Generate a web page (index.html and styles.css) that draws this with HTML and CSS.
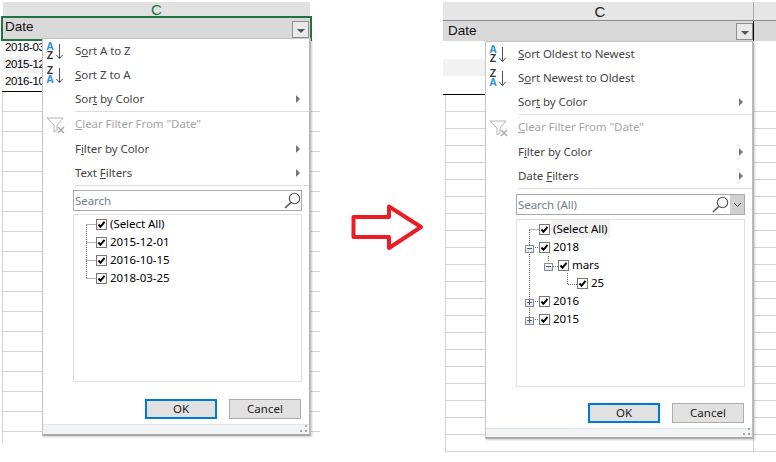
FILE: index.html
```html
<!DOCTYPE html>
<html lang="en">
<head>
<meta charset="utf-8">
<title>Excel date filter comparison</title>
<link rel="stylesheet" href="styles.css">
</head>
<body>
<svg class="defs" aria-hidden="true">
  <symbol id="arrow-down" viewBox="0 0 9 18"><path d="M4.500 1V16M1 12.500L4.500 16.500L8 12.500" fill="none" stroke="#444" stroke-width="1"/></symbol>
  <symbol id="funnel" viewBox="0 0 20 17"><path d="M1 1H17L11 8V13L8 15V8Z" fill="#fff" stroke="#b4b4b4"/><path d="M12 10L18 16M18 10L12 16" fill="none" stroke="#a6a6a6" stroke-width="1.400"/></symbol>
  <symbol id="glass" viewBox="0 0 17 17"><circle cx="10.500" cy="6.500" r="5.200" fill="none" stroke="#555" stroke-width="1.100"/><path d="M6.800 10.500L1 16" fill="none" stroke="#555" stroke-width="1.600"/></symbol>
  <symbol id="tick" viewBox="0 0 11 11"><rect x=".5" y=".5" width="10" height="10" fill="#fff" stroke="#777"/><path d="M2.500 5.500L4.500 7.800L8.500 2.800" fill="none" stroke="#000" stroke-width="2"/></symbol>
</svg>

<section class="panel panel-left">
  <div class="col-head col-head-active">C</div>
  <div class="date-cell date-active"><span>Date</span><span class="filter-btn"><i class="caret"></i></span></div>
  <div class="data-cell first-row"><span class="clip">2018-03-25</span></div>
  <div class="data-cell shaded"><span class="clip">2015-12-01</span></div>
  <div class="data-cell last-row"><span class="clip">2016-10-15</span></div>
  <div class="grid grid-wide"></div>
  <div class="menu">
    <div class="item"><span class="sort-icon"><span class="letters"><b class="blue">A</b><b>Z</b></span><svg class="down"><use href="#arrow-down"/></svg></span><span class="label">S<u>o</u>rt A to Z</span></div>
    <div class="item"><span class="sort-icon"><span class="letters"><b>Z</b><b class="blue">A</b></span><svg class="down"><use href="#arrow-down"/></svg></span><span class="label"><u>S</u>ort Z to A</span></div>
    <div class="item"><span class="label">Sor<u>t</u> by Color</span><i class="more"></i></div>
    <hr class="sep">
    <div class="item disabled"><span class="sort-icon"><svg class="funnel"><use href="#funnel"/></svg></span><span class="label"><u>C</u>lear Filter From "Date"</span></div>
    <div class="item"><span class="label">F<u>i</u>lter by Color</span><i class="more"></i></div>
    <div class="item"><span class="label">Text <u>F</u>ilters</span><i class="more"></i></div>
    <hr class="sep">
    <div class="search"><span class="search-text">Search</span><svg class="glass"><use href="#glass"/></svg></div>
    <div class="list">
      <svg class="dots" width="40" height="80"><path d="M12.500 10V64M12.500 9.500H22M12.500 27.500H22M12.500 45.500H22M12.500 63.500H22"/></svg>
      <div class="row"><svg class="check"><use href="#tick"/></svg><span>(Select All)</span></div>
      <div class="row"><svg class="check"><use href="#tick"/></svg><span>2015-12-01</span></div>
      <div class="row"><svg class="check"><use href="#tick"/></svg><span>2016-10-15</span></div>
      <div class="row"><svg class="check"><use href="#tick"/></svg><span>2018-03-25</span></div>
    </div>
    <div class="actions"><button class="btn btn-default">OK</button><button class="btn">Cancel</button></div>
    <div class="status"><i class="grip"></i></div>
  </div>
</section>

<svg class="big-arrow" width="80" height="56" viewBox="0 0 80 56"><path d="M2.500 14H38V3.500L70 24L38 45V34H2.500Z" fill="#fff" stroke="#ed1c24" stroke-width="4" stroke-linejoin="round"/></svg>

<section class="panel panel-right">
  <div class="col-head col-head-plain">C</div>
  <div class="date-cell date-plain"><span>Date</span><span class="filter-btn"><i class="caret"></i></span></div>
  <div class="blank-cell"></div>
  <div class="blank-cell shaded"></div>
  <div class="blank-cell last-row"></div>
  <div class="grid grid-narrow"></div>
  <div class="menu">
    <div class="item"><span class="sort-icon"><span class="letters"><b class="blue">A</b><b>Z</b></span><svg class="down"><use href="#arrow-down"/></svg></span><span class="label"><u>S</u>ort Oldest to Newest</span></div>
    <div class="item"><span class="sort-icon"><span class="letters"><b>Z</b><b class="blue">A</b></span><svg class="down"><use href="#arrow-down"/></svg></span><span class="label">S<u>o</u>rt Newest to Oldest</span></div>
    <div class="item"><span class="label">Sor<u>t</u> by Color</span><i class="more"></i></div>
    <hr class="sep">
    <div class="item disabled"><span class="sort-icon"><svg class="funnel"><use href="#funnel"/></svg></span><span class="label"><u>C</u>lear Filter From "Date"</span></div>
    <div class="item"><span class="label">F<u>i</u>lter by Color</span><i class="more"></i></div>
    <div class="item"><span class="label">Date <u>F</u>ilters</span><i class="more"></i></div>
    <hr class="sep">
    <div class="search"><span class="search-text">Search (All)</span><svg class="glass"><use href="#glass"/></svg><span class="search-drop"><svg width="9" height="6" viewBox="0 0 9 6"><path d="M1 1L4.500 4.500L8 1" fill="none" stroke="#444"/></svg></span></div>
    <div class="list">
      <svg class="dots" width="80" height="110"><path d="M12.500 10V100M12.500 9.500H22M18 27.500H22M18 81.500H22M18 99.500H22M31.500 36V41M36 46.500H41M50.500 53V64.500H60"/></svg>
      <div class="row"><svg class="check"><use href="#tick"/></svg><span class="hover">(Select All)</span></div>
      <div class="row"><i class="toggle minus"></i><svg class="check"><use href="#tick"/></svg><span>2018</span></div>
      <div class="row depth-1"><i class="toggle minus"></i><svg class="check"><use href="#tick"/></svg><span>mars</span></div>
      <div class="row depth-2"><svg class="check"><use href="#tick"/></svg><span>25</span></div>
      <div class="row"><i class="toggle plus"></i><svg class="check"><use href="#tick"/></svg><span>2016</span></div>
      <div class="row"><i class="toggle plus"></i><svg class="check"><use href="#tick"/></svg><span>2015</span></div>
    </div>
    <div class="actions"><button class="btn btn-default">OK</button><button class="btn">Cancel</button></div>
    <div class="status"><i class="grip"></i></div>
  </div>
</section>
</body>
</html>
```

FILE: styles.css
```css
* { box-sizing: border-box; }
html, body { margin: 0; padding: 0; }
body { width: 776px; height: 462px; position: relative; overflow: hidden; background: #fff; font-family: "Noto Sans", sans-serif; }
.defs { position: absolute; width: 0; height: 0; }

.panel { position: absolute; top: 2px; display: flex; flex-direction: column; }
.panel-left { left: 0; width: 320px; height: 441px; }
.panel-right { left: 443px; top: 2px; width: 333px; height: 451px; }

.col-head { display: flex; align-items: center; justify-content: center; font: 15px "Liberation Sans", sans-serif; background: #e6e6e6; }
.col-head-active { width: 307px; height: 14px; margin-left: 3px; color: #217346; background: #e1e1e1; }
.col-head-plain { height: 19px; padding-right: 19px; color: #222; border-bottom: 1px solid #8a8a8a; background: linear-gradient(90deg, #e6e6e6 310px, #a8a8a8 310px, #a8a8a8 311px, #e6e6e6 311px); }

.date-cell { display: flex; justify-content: space-between; font: 13.500px "Liberation Sans", sans-serif; color: #111; background: #d9d9d9; }
.date-active { width: 311px; height: 25px; margin-left: 1px; padding: 1px 1px 0 2px; border: 2px solid #217346; background: #d9d9d9; line-height: 16px; }
.date-plain { height: 20px; padding: 0 23px 0 5px; line-height: 19px; background: linear-gradient(90deg, #d9d9d9 310px, #000 310px, #000 311px, #d9d9d9 311px); }
.filter-btn { width: 17px; height: 17px; margin-top: 2px; display: flex; align-items: center; justify-content: center; background: #e8e8e8; border: 1px solid #8f8f8f; }
.caret { width: 0; height: 0; margin-top: 2px; border: 4px solid transparent; border-top: 4px solid #555; border-bottom: 0; }

.data-cell { width: 309px; margin-left: 2px; padding-left: 3px; font: 11.500px/13px "Liberation Sans", sans-serif; letter-spacing: -.4px; color: #000; height: 16px; border-right: 1px solid #000; }
.clip { display: block; width: 38px; overflow: hidden; white-space: nowrap; }
.shaded { background: #f2f2f2; }
.data-cell.shaded { padding-top: 1px; }
.data-cell.last-row { height: 19px; padding-top: 2px; border-bottom: 1px solid #000; }
.blank-cell { height: 18px; margin-right: 22px; border-right: 1px solid #000; }
.panel-right .blank-cell.shaded { height: 17px; }
.blank-cell.last-row { height: 19px; border-bottom: 1px solid #000; }

.grid { flex: 1; }
.grid-wide { margin-left: 2px; background:
  linear-gradient(90deg, #d4d4d4 1px, transparent 1px) 0 0 / 100% 100% no-repeat,
  repeating-linear-gradient(180deg, transparent 0, transparent 19px, #d4d4d4 19px, #d4d4d4 20px); }
.grid-narrow { margin-left: 2px; background:
  linear-gradient(90deg, #d4d4d4 1px, transparent 1px) 0 0 / 100% 100% no-repeat,
  linear-gradient(90deg, transparent 308px, #d4d4d4 308px, #d4d4d4 309px, transparent 309px) 0 0 / 100% 100% no-repeat,
  repeating-linear-gradient(180deg, transparent 0, transparent 16px, #d4d4d4 16px, #d4d4d4 17px); }

.menu { position: absolute; left: 42px; width: 269px; height: 398px; display: flex; flex-direction: column; background: #fff; border: 1px solid #c6c6c6; border-right: 2px solid #b9b9b9; border-bottom: 2px solid #a9a9a9; box-shadow: 1px 1px 2px rgba(0,0,0,.2); color: #444; font-size: 11.500px; letter-spacing: -.05px; }
.panel-left .menu { top: 36px; }
.panel-right .menu { top: 39px; }

.item { height: 24px; flex: none; display: flex; align-items: center; position: relative; padding-left: 32px; line-height: 16px; }
.label { white-space: nowrap; }
.disabled { color: #a6a6a6; }
.sort-icon { position: absolute; left: 2px; top: 0; width: 24px; height: 24px; display: flex; align-items: center; }
.letters { display: flex; flex-direction: column; width: 10px; font: bold 10.500px/9px "Liberation Sans", sans-serif; text-align: center; color: #333; }
.letters b { display: block; }
.letters .blue { color: #2e8fdc; }
.down { width: 9px; height: 17px; }
.funnel { width: 20px; height: 17px; margin: 2px 0 0 1px; }
.more { position: absolute; right: 9px; top: 8px; border-left: 4px solid #777; border-top: 4px solid transparent; border-bottom: 4px solid transparent; }
.sep { flex: none; height: 1px; margin: 0 0 0 32px; border: 0; background: #dedede; }
.sep + .disabled { margin-bottom: 1px; }

.search { flex: none; position: relative; margin: 4px 7px 0 30px; height: 21px; display: flex; align-items: center; border: 1px solid #a8a8a8; padding-left: 1px; color: #6f7f8f; }
.panel-right .search { margin-top: 5px; }
.glass { position: absolute; right: 0; top: 1px; width: 17px; height: 17px; }
.search-drop { position: absolute; right: 0; top: 0; width: 14px; height: 19px; background: #d0d0d0; display: flex; align-items: center; justify-content: center; }
.search:has(.search-drop) .glass { right: 15px; }

.list { flex: none; position: relative; margin: 3px 7px 0 30px; height: 168px; padding: 0 0 0 22px; border: 1px solid #e0e0e0; color: #000; }
.panel-right .list { margin-top: 4px; }
.dots { position: absolute; left: 0; top: 0; }
.dots path { fill: none; stroke: #666; stroke-width: 1; stroke-dasharray: 1 1; }
.row { position: relative; height: 18px; display: flex; align-items: center; gap: 3px; }
.row span { margin-bottom: 1px; }
.check { width: 11px; height: 11px; flex: none; position: relative; }
.depth-1 { margin-left: 19px; }
.depth-2 { margin-left: 38px; }
.row .hover { background: #f0f0f0; padding: 0 2px; margin: 0 0 0 -2px; line-height: 18px; }
.toggle { position: absolute; margin-left: -14px; top: 7px; width: 9px; height: 8px; border: 1px solid #8a8a8a; background: linear-gradient(#fff, #dfe3ea); }
.toggle::before { content: ""; position: absolute; left: 1px; top: 2px; width: 5px; height: 1px; background: #3b5ba5; }
.plus::after { content: ""; position: absolute; left: 3px; top: 0; width: 1px; height: 5px; background: #3b5ba5; }

.actions { flex: none; display: flex; justify-content: flex-end; gap: 12px; margin-top: 17px; padding-right: 8px; }
.panel-right .actions { margin-top: 16px; }
.btn { width: 72px; height: 20px; padding: 0; font: 11.500px/16px "Noto Sans", sans-serif; color: #222; background: #e1e1e1; border: 1px solid #adadad; }
.btn-default { border: 2px solid #0078d7; }

.status { flex: none; position: relative; margin-top: 5px; flex-grow: 1; background: #f1f3f5; border-top: 1px solid #e1e6eb; }
.grip { position: absolute; right: 2px; bottom: 2px; width: 7px; height: 7px; background:
  linear-gradient(#a8a8a8, #a8a8a8) 5px 5px / 2px 2px no-repeat,
  linear-gradient(#a8a8a8, #a8a8a8) 0 5px / 2px 2px no-repeat,
  linear-gradient(#a8a8a8, #a8a8a8) 5px 0 / 2px 2px no-repeat; }

.big-arrow { position: absolute; left: 351px; top: 203px; }
```
